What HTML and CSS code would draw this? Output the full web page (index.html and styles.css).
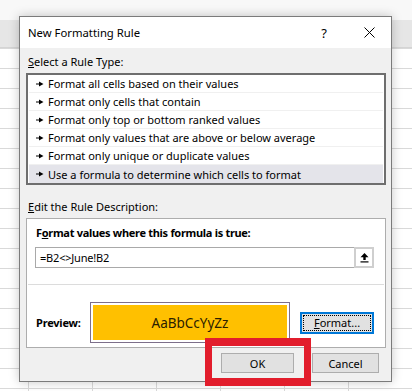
FILE: index.html
```html
<!DOCTYPE html>
<html lang="en">
<head>
<meta charset="utf-8">
<title>New Formatting Rule</title>
<link rel="stylesheet" href="styles.css">
</head>
<body>
<div class="page">
  <div class="dialog">
    <div class="titlebar">
      <span class="title">New Formatting Rule</span>
      <span class="help">?</span>
      <span class="close">
        <svg width="11" height="11" viewBox="0 0 11 11"><path d="M0.5 0.5 L10.5 10.5 M10.5 0.5 L0.5 10.5" stroke="#000" stroke-width="1" fill="none"/></svg>
      </span>
    </div>
    <div class="body">
      <div class="label"><u>S</u>elect a Rule Type:</div>
      <ul class="rules">
        <li class="rule"><svg class="arr" width="8" height="6" viewBox="0 0 8 6"><path d="M0 3 H4" stroke="#000" stroke-width="1"/><path d="M3 0.5 L7.5 3 L3 5.5 Z" fill="#000"/></svg>Format all cells based on their values</li>
        <li class="rule"><svg class="arr" width="8" height="6" viewBox="0 0 8 6"><path d="M0 3 H4" stroke="#000" stroke-width="1"/><path d="M3 0.5 L7.5 3 L3 5.5 Z" fill="#000"/></svg>Format only cells that contain</li>
        <li class="rule"><svg class="arr" width="8" height="6" viewBox="0 0 8 6"><path d="M0 3 H4" stroke="#000" stroke-width="1"/><path d="M3 0.5 L7.5 3 L3 5.5 Z" fill="#000"/></svg>Format only top or bottom ranked values</li>
        <li class="rule"><svg class="arr" width="8" height="6" viewBox="0 0 8 6"><path d="M0 3 H4" stroke="#000" stroke-width="1"/><path d="M3 0.5 L7.5 3 L3 5.5 Z" fill="#000"/></svg>Format only values that are above or below average</li>
        <li class="rule"><svg class="arr" width="8" height="6" viewBox="0 0 8 6"><path d="M0 3 H4" stroke="#000" stroke-width="1"/><path d="M3 0.5 L7.5 3 L3 5.5 Z" fill="#000"/></svg>Format only unique or duplicate values</li>
        <li class="rule selected"><svg class="arr" width="8" height="6" viewBox="0 0 8 6"><path d="M0 3 H4" stroke="#000" stroke-width="1"/><path d="M3 0.5 L7.5 3 L3 5.5 Z" fill="#000"/></svg>Use a formula to determine which cells to format</li>
      </ul>
      <div class="label label-edit"><u>E</u>dit the Rule Description:</div>
      <div class="desc">
        <div class="desc-title">F<u>o</u>rmat values where this formula is true:</div>
        <div class="formula">
          <span class="formula-text">=B2&lt;&gt;June!B2</span>
          <span class="pick">
            <svg width="9" height="10" viewBox="0 0 9 10"><path d="M4.5 0 L8.5 4.2 L5.7 4.2 L5.7 7 L3.3 7 L3.3 4.2 L0.5 4.2 Z" fill="#000"/><rect x="0.5" y="8.3" width="8" height="1.2" fill="#000"/></svg>
          </span>
        </div>
        <div class="sep"></div>
        <div class="preview-row">
          <span class="preview-label">Preview:</span>
          <div class="preview-box"><div class="preview-fill">AaBbCcYyZz</div></div>
          <button class="btn btn-format"><u>F</u>ormat...</button>
        </div>
      </div>
      <div class="actions">
        <button class="btn btn-ok">OK</button>
        <button class="btn btn-cancel">Cancel</button>
      </div>
    </div>
  </div>
  <div class="highlight"></div>
</div>
</body>
</html>
```

FILE: styles.css
```css
html, body {
  margin: 0;
  padding: 0;
}
body {
  font-family: "Noto Sans", "Open Sans", sans-serif;
  font-size: 11px;
  color: #000;
}
.page {
  position: relative;
  width: 412px;
  height: 391px;
  overflow: hidden;
  background-color: #fff;
  background-image:
    linear-gradient(#d4d4d4, #d4d4d4),
    linear-gradient(#e6e6e6, #e6e6e6),
    linear-gradient(#f8f8f8, #f8f8f8),
    repeating-linear-gradient(180deg, #d9d9d9 0 1px, transparent 1px 20px),
    repeating-linear-gradient(90deg, #d9d9d9 0 1px, transparent 1px 64px);
  background-position: 0 47px, 0 20px, 0 0, 0 48px, 28px 48px;
  background-size: 100% 1px, 100% 27px, 100% 20px, 100% 100%, 100% 100%;
  background-repeat: no-repeat;
  padding-top: 16px;
  box-sizing: border-box;
}
.dialog {
  margin-left: 19px;
  width: 373px;
  height: 366px;
  box-sizing: border-box;
  border: 1px solid #7b7b7b;
  background: #f0f0f0;
  box-shadow: 0 0 10px rgba(0, 0, 0, 0.22);
  display: flex;
  flex-direction: column;
}
.titlebar {
  height: 31px;
  background: #fff;
  display: flex;
  align-items: center;
  padding: 0 7px 0 8px;
  font-size: 11.3px;
}
.title {
  flex: 1;
}
.help {
  width: 20px;
  text-align: center;
  font-size: 13px;
  margin-right: 20px;
}
.close {
  width: 30px;
  display: flex;
  justify-content: center;
  align-items: center;
}
.body {
  flex: 1;
  padding: 6px 5px 0 6px;
  display: flex;
  flex-direction: column;
}
.label {
  line-height: 16px;
  padding-left: 2px;
}
.rules {
  list-style: none;
  margin: 3px 0 0 0;
  padding: 0 1px;
  border: 2px solid #6e6e6e;
  background: #fff;
}
.rule {
  height: 18px;
  line-height: 17px;
  box-sizing: border-box;
  border-bottom: 1px solid #f0f0f0;
  display: flex;
  align-items: center;
  padding-left: 7px;
  white-space: nowrap;
}
.rule:last-child {
  border-bottom: none;
}
.rule.selected {
  background: #e4e4ea;
}
.arr {
  margin-right: 4px;
  flex: none;
}
.label-edit {
  margin-top: 14px;
}
.desc {
  margin-top: 3px;
  height: 130px;
  box-sizing: border-box;
  border: 1px solid #adadad;
  background: #fff;
  padding: 6px 11px 0 8px;
  display: flex;
  flex-direction: column;
}
.desc-title {
  font-weight: bold;
  line-height: 16px;
  padding-left: 1px;
  letter-spacing: -0.3px;
}
.formula {
  margin-top: 6px;
  height: 21px;
  box-sizing: border-box;
  border: 1px solid #a9a9a9;
  display: flex;
  align-items: center;
}
.formula-text {
  flex: 1;
  padding-left: 4px;
  letter-spacing: -0.2px;
}
.pick {
  width: 20px;
  height: 21px;
  margin: -1px -1px -1px 0;
  box-sizing: border-box;
  border: 2px solid #cfcfcf;
  background: #fff;
  display: flex;
  align-items: center;
  justify-content: center;
}
.sep {
  margin: 16px -10px 0 -7px;
  height: 1px;
  background: #dcdcdc;
}
.preview-row {
  margin-top: 17px;
  display: flex;
  align-items: center;
}
.preview-label {
  font-weight: bold;
  width: 54px;
  padding-left: 1px;
  letter-spacing: -0.2px;
}
.preview-box {
  width: 200px;
  height: 41px;
  box-sizing: border-box;
  border: 1px solid #7d6f8a;
  padding: 2px;
  background: #fff;
}
.preview-fill {
  height: 100%;
  background: #ffc000;
  display: flex;
  align-items: center;
  justify-content: center;
  font-size: 13.5px;
  color: #2b2000;
}
.btn {
  font-family: inherit;
  font-size: 11px;
  color: #000;
  background: #e1e1e1;
  border: 1px solid #adadad;
  padding: 0;
  margin: 0;
  height: 20px;
  box-sizing: border-box;
}
.btn-format {
  position: relative;
  margin-left: 10px;
  width: 74px;
  height: 22px;
  border: 1px solid #0078d7;
  box-shadow: inset 0 0 0 1px #0078d7;
}
.btn-format::after {
  content: "";
  position: absolute;
  inset: 2px;
  border: 1px dotted #000;
}
.actions {
  margin-top: 5px;
  display: flex;
  justify-content: flex-end;
  gap: 18px;
  padding-right: 7px;
}
.btn-ok {
  width: 73px;
}
.btn-cancel {
  width: 67px;
}
.highlight {
  position: absolute;
  left: 205px;
  top: 338px;
  width: 106px;
  height: 48px;
  box-sizing: border-box;
  border-style: solid;
  border-color: #e21d2c;
  border-width: 8px 7px 8px 7px;
}
```
